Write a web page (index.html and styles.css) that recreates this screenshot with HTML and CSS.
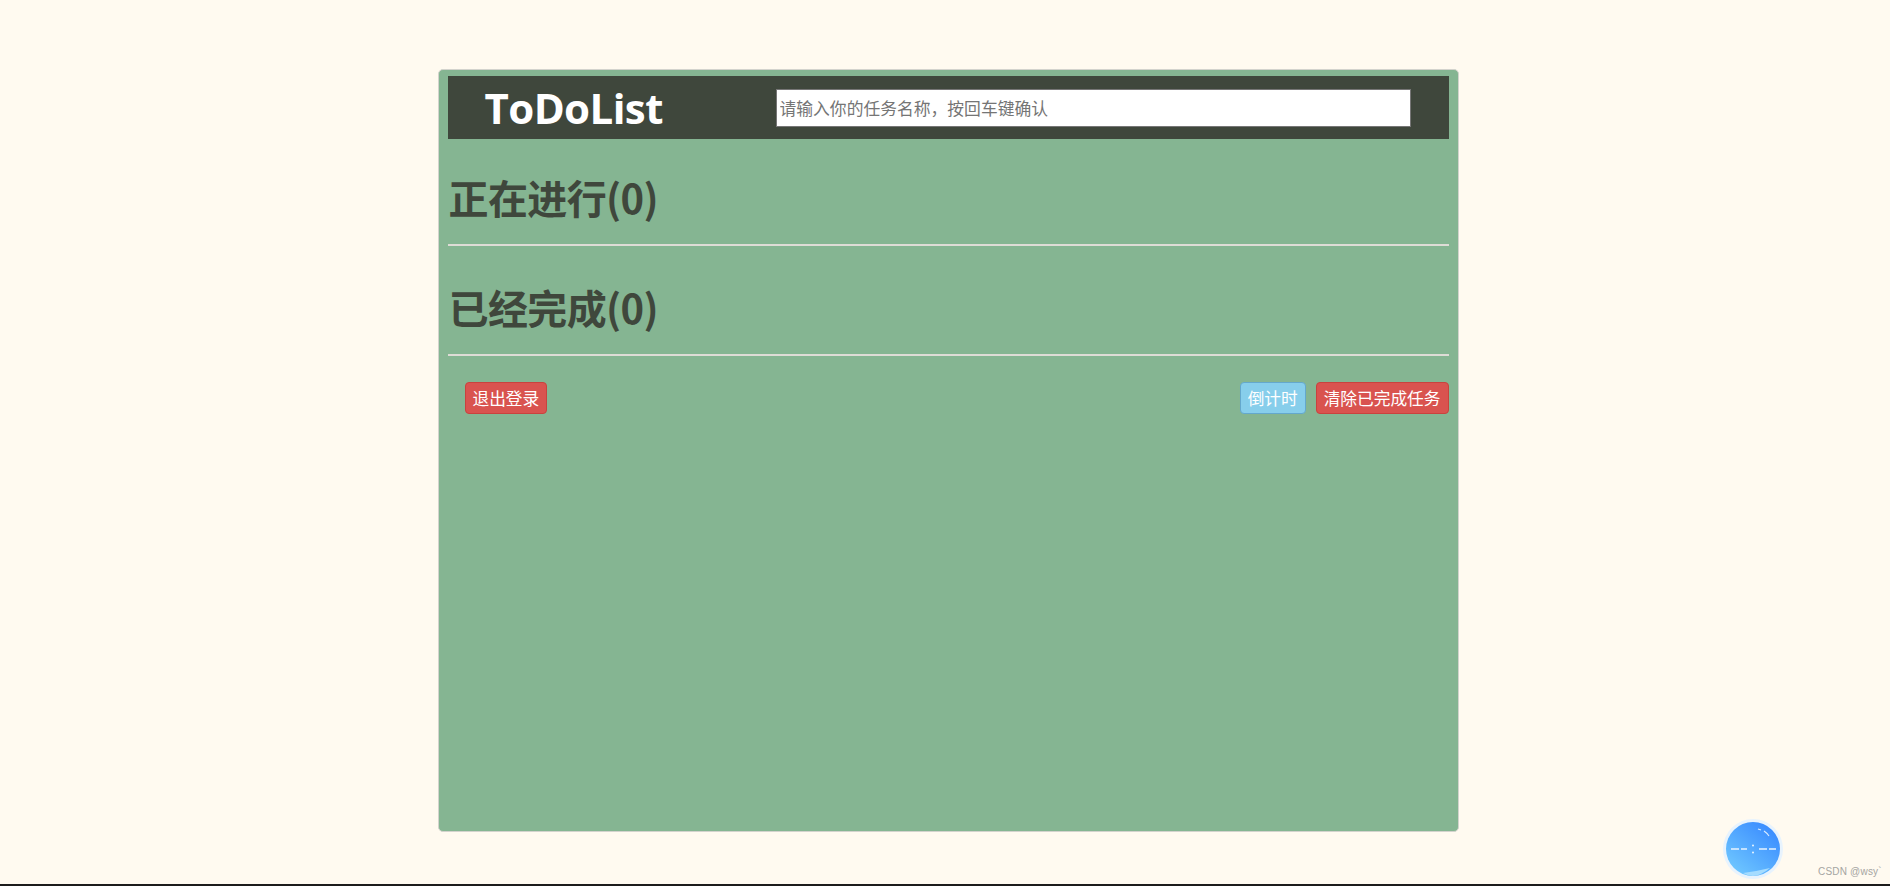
FILE: index.html
```html
<!DOCTYPE html>
<html lang="zh-CN">
<head>
<meta charset="utf-8">
<title>ToDoList</title>
<link rel="stylesheet" href="styles.css">
</head>
<body>
<main class="page">
  <section class="panel">
    <header class="topbar">
      <h1 class="logo">ToDoList</h1>
      <input class="task-input" type="text" placeholder="请输入你的任务名称，按回车键确认">
    </header>
    <h2 class="section-title first">正在进行(0)</h2>
    <hr class="rule">
    <h2 class="section-title">已经完成(0)</h2>
    <hr class="rule">
    <div class="actions">
      <button class="btn danger">退出登录</button>
      <div class="actions-right">
        <button class="btn info">倒计时</button>
        <button class="btn danger">清除已完成任务</button>
      </div>
    </div>
  </section>
</main>
<div class="bottom-line"></div>
<div class="clock">
  <svg width="62" height="62" viewBox="0 0 62 62">
    <defs>
      <linearGradient id="g" x1="0.85" y1="0.1" x2="0.2" y2="0.9">
        <stop offset="0" stop-color="#3a8cff"/>
        <stop offset="1" stop-color="#6cc4ff"/>
      </linearGradient>
    </defs>
    <circle cx="31" cy="31" r="30" fill="#e8f3fd"/>
    <circle cx="31" cy="31" r="27" fill="url(#g)"/>
    <path d="M21 55 Q36 53 48 50 Q40 57 31 58 Q26 58 21 55Z" fill="#a5dcff"/>
    <path d="M36 11 l3 1 M42 13 q3 2 5 5" stroke="#d8ecff" stroke-width="1.2" fill="none"/>
    <path d="M9 31h8M19 31h6M37 31h8M47 31h7" stroke="#e8f4ff" stroke-width="1.5"/>
    <circle cx="31" cy="27.5" r="1" fill="#e8f4ff"/>
    <circle cx="31" cy="34.5" r="1" fill="#e8f4ff"/>
  </svg>
</div>
<div class="watermark">CSDN @wsy`</div>
</body>
</html>
```
FILE: styles.css
```css
* { box-sizing: border-box; }
html, body { margin: 0; height: 886px; overflow: hidden; }
body {
  background: #fffaf0;
  display: flex;
  flex-direction: column;
  font-family: "Open Sans", "Noto Sans CJK SC", sans-serif;
  position: relative;
}
.page {
  flex: 1;
  display: flex;
  justify-content: center;
  padding-top: 69px;
}
.panel {
  width: 1021px;
  height: 763px;
  margin-left: 6px;
  padding: 6px 9px 0;
  background: #85b592;
  border: 1px solid #d3d3cd;
  border-radius: 5px;
}
.topbar {
  height: 63px;
  background: #3f473c;
  display: flex;
  align-items: center;
}
.logo {
  margin: 0 0 0 37px;
  width: 291px;
  color: #fff;
  font-size: 42px;
  line-height: 63px;
  font-weight: 700;
  letter-spacing: -0.6px;
}
.task-input {
  width: 635px;
  height: 38px;
  padding: 0 3px;
  background: #fff;
  border: 1px solid #767676;
  border-radius: 0;
  outline: none;
  font: 16.8px "Noto Sans CJK SC", sans-serif;
}
.task-input::placeholder { color: #757575; opacity: 1; }
.section-title {
  margin: 0;
  height: 54px;
  padding-left: 1px;
  color: #3f473c;
  font: 700 40px/54px "Noto Sans CJK SC", sans-serif;
  letter-spacing: -0.6px;
}
.section-title.first { margin-top: 31px; }
.section-title + .rule { margin-top: 20px; }
.rule {
  margin: 0 0 34px;
  height: 2px;
  border: 0;
  background: #dedcd6;
}
.actions {
  display: flex;
  justify-content: space-between;
  padding-left: 17px;
  margin-top: -8px;
}
.actions-right { display: flex; gap: 10px; }
.btn {
  height: 32px;
  padding: 0 7px;
  border: 1px solid;
  border-radius: 4px;
  color: #fff;
  font: 16.7px/30px "Noto Sans CJK SC", sans-serif;
  white-space: nowrap;
}
.danger { background: #d9534f; border-color: #c9423e; }
.info { background: #87ceeb; border-color: #64a8cc; }
.bottom-line { height: 2px; background: #1c1c1c; flex: none; }
.clock {
  position: absolute;
  left: 1722px;
  top: 818px;
  width: 62px;
  height: 62px;
  line-height: 0;
}
.watermark {
  position: absolute;
  left: 1818px;
  top: 865px;
  color: #a5a5a2;
  font: 10px/14px "Liberation Sans", sans-serif;
  letter-spacing: 0.2px;
}
```
